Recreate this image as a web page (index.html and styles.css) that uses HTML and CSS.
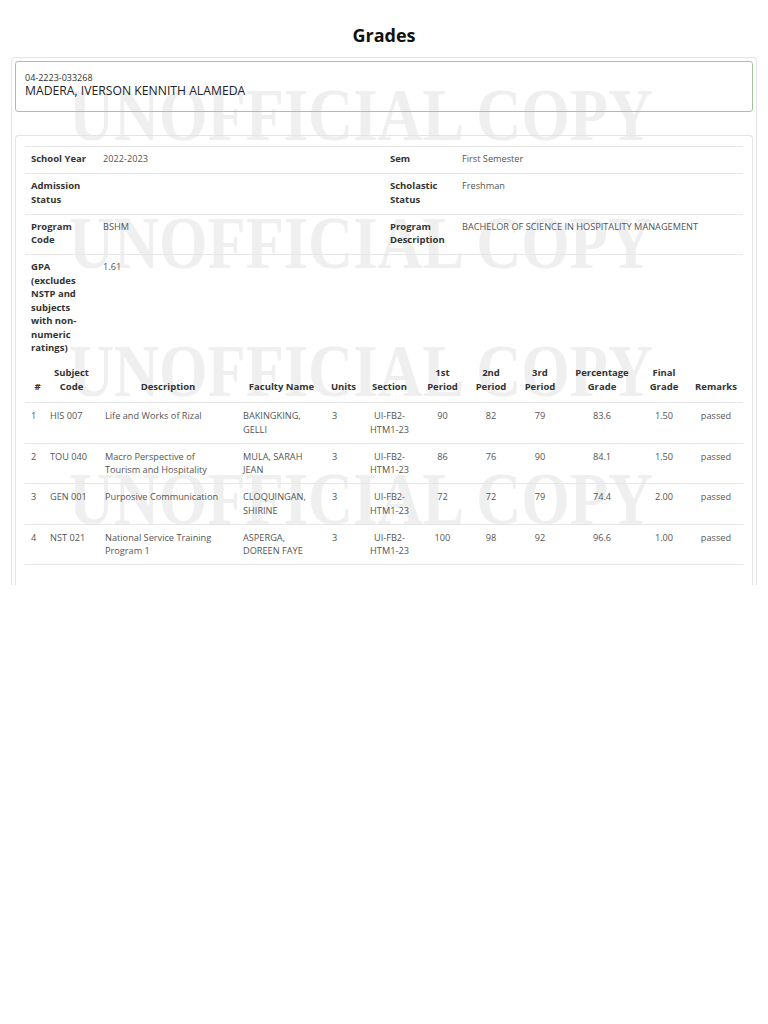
FILE: index.html
```html
<!DOCTYPE html>
<html lang="en">
<head>
<meta charset="utf-8">
<title>Grades</title>
<link rel="stylesheet" href="styles.css">
</head>
<body>
<div class="watermark" aria-hidden="true">
  <div class="wm-line">UNOFFICIAL COPY</div>
  <div class="wm-line">UNOFFICIAL COPY</div>
  <div class="wm-line">UNOFFICIAL COPY</div>
  <div class="wm-line">UNOFFICIAL COPY</div>
</div>
<div class="page">
  <h1 class="title">Grades</h1>
  <div class="outer">
    <div class="student">
      <div class="sid">04-2223-033268</div>
      <div class="sname">MADERA, IVERSON KENNITH ALAMEDA</div>
    </div>
    <div class="panel">
      <table class="info">
        <colgroup>
          <col class="c-lab"><col class="c-val"><col class="c-lab"><col class="c-val">
        </colgroup>
        <tr>
          <th>School Year</th><td>2022-2023</td>
          <th>Sem</th><td>First Semester</td>
        </tr>
        <tr>
          <th>Admission Status</th><td></td>
          <th>Scholastic Status</th><td>Freshman</td>
        </tr>
        <tr>
          <th>Program Code</th><td>BSHM</td>
          <th>Program Description</th><td>BACHELOR OF SCIENCE IN HOSPITALITY MANAGEMENT</td>
        </tr>
        <tr class="last">
          <th>GPA (excludes NSTP and subjects with non-numeric ratings)</th><td>1.61</td>
          <th></th><td></td>
        </tr>
      </table>
      <table class="grades">
        <colgroup>
          <col class="g-num"><col class="g-code"><col class="g-desc"><col class="g-fac">
          <col class="g-units"><col class="g-sec"><col class="g-p1"><col class="g-p2">
          <col class="g-p3"><col class="g-pct"><col class="g-fin"><col class="g-rem">
        </colgroup>
        <thead>
          <tr>
            <th>#</th><th>Subject Code</th><th>Description</th><th>Faculty Name</th>
            <th>Units</th><th>Section</th><th>1st Period</th><th>2nd Period</th>
            <th>3rd Period</th><th>Percentage Grade</th><th>Final Grade</th><th>Remarks</th>
          </tr>
        </thead>
        <tbody>
          <tr>
            <td>1</td><td>HIS 007</td><td>Life and Works of Rizal</td><td>BAKINGKING, GELLI</td>
            <td>3</td><td class="c">UI-FB2-HTM1-23</td><td class="c">90</td><td class="c">82</td>
            <td class="c">79</td><td class="c">83.6</td><td class="c">1.50</td><td class="c">passed</td>
          </tr>
          <tr>
            <td>2</td><td>TOU 040</td><td>Macro Perspective of Tourism and Hospitality</td><td>MULA, SARAH JEAN</td>
            <td>3</td><td class="c">UI-FB2-HTM1-23</td><td class="c">86</td><td class="c">76</td>
            <td class="c">90</td><td class="c">84.1</td><td class="c">1.50</td><td class="c">passed</td>
          </tr>
          <tr>
            <td>3</td><td>GEN 001</td><td>Purposive Communication</td><td>CLOQUINGAN, SHIRINE</td>
            <td>3</td><td class="c">UI-FB2-HTM1-23</td><td class="c">72</td><td class="c">72</td>
            <td class="c">79</td><td class="c">74.4</td><td class="c">2.00</td><td class="c">passed</td>
          </tr>
          <tr>
            <td>4</td><td>NST 021</td><td>National Service Training Program 1</td><td>ASPERGA, DOREEN FAYE</td>
            <td>3</td><td class="c">UI-FB2-HTM1-23</td><td class="c">100</td><td class="c">98</td>
            <td class="c">92</td><td class="c">96.6</td><td class="c">1.00</td><td class="c">passed</td>
          </tr>
        </tbody>
      </table>
    </div>
  </div>
</div>
</body>
</html>
```

FILE: styles.css
```css
html, body {
  margin: 0;
  padding: 0;
  background: #ffffff;
}

body {
  font-family: "Open Sans", "Noto Sans", "DejaVu Sans", sans-serif;
  color: #333333;
  position: relative;
  width: 768px;
  min-height: 1024px;
}

.watermark {
  position: absolute;
  top: 51px;
  left: 69px;
  pointer-events: none;
}

.wm-line {
  font-family: "Liberation Serif", "Times New Roman", serif;
  font-weight: 700;
  font-size: 74px;
  line-height: 128px;
  height: 128px;
  color: #efefef;
  white-space: nowrap;
  transform: scaleX(0.843);
  transform-origin: left center;
}

.page {
  position: relative;
  padding: 23px 11px 0;
}

.title {
  margin: 0 0 9px;
  text-align: center;
  font-size: 18px;
  line-height: 25px;
  font-weight: 700;
  color: #111111;
}

.outer {
  border: 1px solid #e4e4e4;
  border-bottom: none;
  border-radius: 4px 4px 0 0;
  padding: 3px 3px 0;
}

.student {
  border: 1px solid #9fc79f;
  border-radius: 3px;
  padding: 10px 9px 12px;
}

.sid {
  font-size: 9px;
  line-height: 11px;
  color: #333333;
}

.sname {
  font-size: 12.2px;
  line-height: 16px;
  color: #222222;
}

.panel {
  margin-top: 23px;
  border: 1px solid #e4e4e4;
  border-bottom: none;
  border-radius: 4px 4px 0 0;
  padding: 10px 9px 20px;
}

table {
  width: 718px;
  border-collapse: collapse;
  table-layout: fixed;
  line-height: 13.5px;
}

th, td {
  padding: 5px 6px 7.5px;
  text-align: left;
  vertical-align: top;
  overflow-wrap: break-word;
}

th {
  font-size: 9.5px;
  font-weight: 700;
  color: #333333;
}

td {
  font-size: 9.2px;
  color: #555555;
}

.info tr {
  border-top: 1px solid #e6e6e6;
}

.c-lab { width: 72px; }
.c-val { width: 287px; }

.grades th {
  padding: 4px 4px 9px;
  text-align: center;
  vertical-align: bottom;
}

.grades td {
  padding: 6px 6px 6.5px;
}

.grades thead tr,
.grades tbody tr {
  border-bottom: 1px solid #e6e6e6;
}

.grades td.c {
  text-align: center;
}

.g-num { width: 19px; }
.g-code { width: 55px; }
.g-desc { width: 138px; }
.g-fac { width: 89px; }
.g-units { width: 35px; }
.g-sec { width: 57px; }
.g-p1 { width: 49px; }
.g-p2 { width: 48px; }
.g-p3 { width: 50px; }
.g-pct { width: 74px; }
.g-fin { width: 50px; }
.g-rem { width: 54px; }

.grades th:first-child,
.grades td:first-child {
  padding-left: 6px;
  padding-right: 0;
}
```
